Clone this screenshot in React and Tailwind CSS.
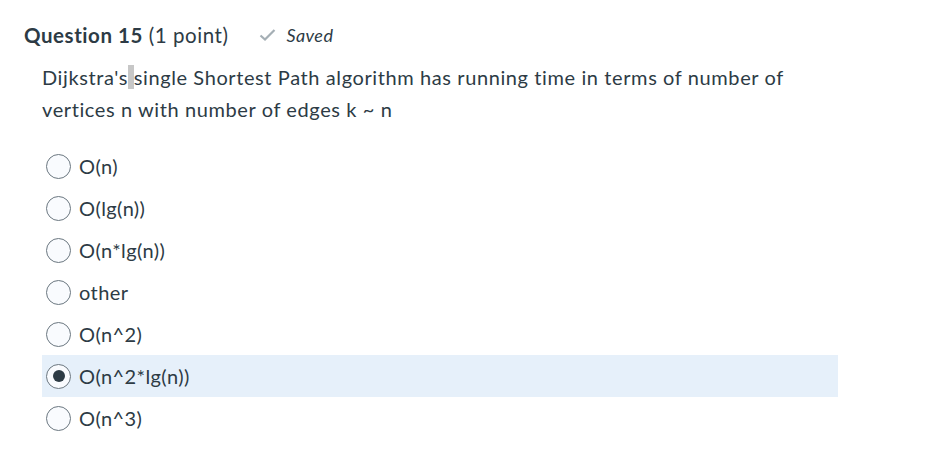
const options = [
  "O(n)",
  "O(lg(n))",
  "O(n*lg(n))",
  "other",
  "O(n^2)",
  "O(n^2*lg(n))",
  "O(n^3)",
];

function Radio({ checked }) {
  return (
    <span className="flex h-[25px] w-[25px] shrink-0 items-center justify-center rounded-full border border-[#6b7780] bg-[#f9fbfe]">
      {checked && <span className="h-[12px] w-[12px] rounded-full bg-[#2d3b45]" />}
    </span>
  );
}

export default function App() {
  const selected = 5;
  return (
    <div className="min-h-screen bg-white pl-[24px] pt-[21px] font-['Lato',sans-serif] tracking-[0.4px] text-[#2d3b45]">
      <div className="flex items-center">
        <h2 className="text-[20.5px] leading-[28px] tracking-[0.55px]">
          <span className="font-bold">Question 15</span> (1 point)
        </h2>
        <span className="ml-[31px] flex items-center gap-[10px]">
          <svg width="17" height="14" viewBox="0 0 17 14">
            <path d="M1.5 7.5 L6 11.5 L15.5 2" fill="none" stroke="#a5afb5" strokeWidth="2.2" />
          </svg>
          <span className="text-[18px] italic text-[#2d3b45]">Saved</span>
        </span>
      </div>

      <p className="mt-[12px] ml-[18px] max-w-[780px] text-[20px] leading-[32px] tracking-[0.6px]">
        Dijkstra's<span className="bg-[#c7c7c7]"> </span>single Shortest Path algorithm has running time in terms of number of vertices n with number of edges k ~ n
      </p>

      <div className="mt-[20px] ml-[18px] w-[796px]">
        {options.map((opt, i) => (
          <label
            key={opt}
            className={`flex h-[42px] items-center gap-[8px] pl-[4px] ${i === selected ? "bg-[#e6f0fa]" : ""}`}
          >
            <Radio checked={i === selected} />
            <span className="text-[20px]">{opt}</span>
          </label>
        ))}
      </div>
    </div>
  );
}
